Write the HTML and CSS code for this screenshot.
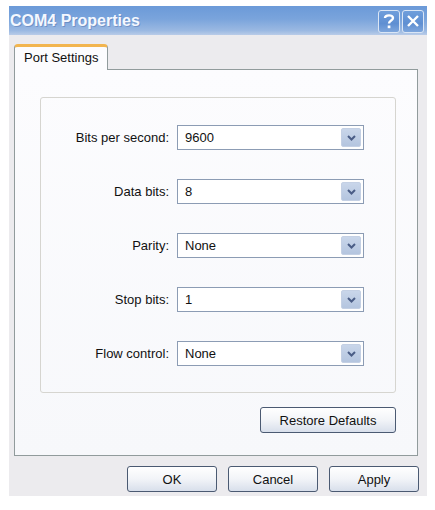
FILE: index.html
```html
<!DOCTYPE html>
<html>
<head>
<meta charset="utf-8">
<link rel="stylesheet" href="styles.css">
</head>
<body>
<div class="window">
  <div class="titlebar">
    <span class="title">COM4 Properties</span>
    <div class="tbtns">
      <span class="tbtn">
        <svg width="14" height="16" viewBox="0 0 14 16"><path d="M3 5 C3 1.5 11 1.5 11 5 C11 7.5 7 7.5 7 10.5" fill="none" stroke="#fff" stroke-width="2.4"/><rect x="5.7" y="12.5" width="2.7" height="2.7" fill="#fff"/></svg>
      </span>
      <span class="tbtn">
        <svg width="14" height="14" viewBox="0 0 14 14"><path d="M2 2 L12 12 M12 2 L2 12" stroke="#fff" stroke-width="2.4"/></svg>
      </span>
    </div>
  </div>
  <div class="client">
    <div class="tabs">
      <div class="tab">Port Settings</div>
    </div>
    <div class="panel">
      <div class="group">
        <div class="row"><span class="lbl">Bits per second:</span><div class="combo"><span class="val">9600</span><span class="drop"><svg width="9" height="6" viewBox="0 0 9 6"><path d="M1 1 L4.5 4.5 L8 1" fill="none" stroke="#4a5d86" stroke-width="2"/></svg></span></div></div>
        <div class="row"><span class="lbl">Data bits:</span><div class="combo"><span class="val">8</span><span class="drop"><svg width="9" height="6" viewBox="0 0 9 6"><path d="M1 1 L4.5 4.5 L8 1" fill="none" stroke="#4a5d86" stroke-width="2"/></svg></span></div></div>
        <div class="row"><span class="lbl">Parity:</span><div class="combo"><span class="val">None</span><span class="drop"><svg width="9" height="6" viewBox="0 0 9 6"><path d="M1 1 L4.5 4.5 L8 1" fill="none" stroke="#4a5d86" stroke-width="2"/></svg></span></div></div>
        <div class="row"><span class="lbl">Stop bits:</span><div class="combo"><span class="val">1</span><span class="drop"><svg width="9" height="6" viewBox="0 0 9 6"><path d="M1 1 L4.5 4.5 L8 1" fill="none" stroke="#4a5d86" stroke-width="2"/></svg></span></div></div>
        <div class="row"><span class="lbl">Flow control:</span><div class="combo"><span class="val">None</span><span class="drop"><svg width="9" height="6" viewBox="0 0 9 6"><path d="M1 1 L4.5 4.5 L8 1" fill="none" stroke="#4a5d86" stroke-width="2"/></svg></span></div></div>
      </div>
      <div class="restore-row">
        <button class="btn restore">Restore Defaults</button>
      </div>
    </div>
    <div class="actions">
      <button class="btn">OK</button>
      <button class="btn">Cancel</button>
      <button class="btn">Apply</button>
    </div>
  </div>
</div>
</body>
</html>
```

FILE: styles.css
```css
html, body {
  margin: 0;
  padding: 0;
  background: #ffffff;
  width: 435px;
  height: 510px;
  overflow: hidden;
  font-family: "Liberation Sans", Arial, sans-serif;
}

.window {
  margin: 6px 0 0 9px;
  width: 418px;
  height: 490px;
  background: #ecebee;
  display: flex;
  flex-direction: column;
}

.titlebar {
  height: 29px;
  flex: none;
  background: linear-gradient(#6b9ad8 0%, #7aa4dc 45%, #9bb9e2 85%, #b9cce8 100%);
  display: flex;
  align-items: center;
  justify-content: space-between;
  padding: 0 3px 0 1px;
}

.title {
  color: #f4f8ff;
  font-weight: bold;
  font-size: 16px;
  letter-spacing: 0;
  text-shadow: 1px 1px 0 rgba(60, 90, 150, 0.35);
}

.tbtns {
  display: flex;
  gap: 2px;
  margin-top: 1px;
}

.tbtn {
  width: 22px;
  height: 23px;
  box-sizing: border-box;
  border: 1px solid #dbe6f5;
  border-radius: 3px;
  background: linear-gradient(#6f9edb, #5f8fd2 60%, #7ea6dc);
  display: flex;
  align-items: center;
  justify-content: center;
}

.client {
  flex: 1;
  display: flex;
  flex-direction: column;
  padding: 9px 9px 0 5px;
}

.tabs {
  display: flex;
  height: 25px;
}

.tab {
  width: 94px;
  box-sizing: border-box;
  height: 26px;
  background: #fcfcfe;
  border: 1px solid #919b9c;
  border-top: 3px solid #f2b54f;
  border-bottom: none;
  border-radius: 4px 4px 0 0;
  font-size: 13px;
  color: #111;
  padding: 3px 0 0 9px;
  position: relative;
  z-index: 1;
}

.panel {
  height: 387px;
  box-sizing: border-box;
  background: linear-gradient(#fcfcfe, #f7f8fb);
  border: 1px solid #919b9c;
  padding: 27px 21px 0 25px;
  display: flex;
  flex-direction: column;
}

.group {
  height: 296px;
  box-sizing: border-box;
  border: 1px solid #d6d5d0;
  border-radius: 3px;
  padding: 27px 0 0 0;
  display: flex;
  flex-direction: column;
  gap: 29px;
}

.row {
  display: flex;
  align-items: center;
  height: 25px;
}

.lbl {
  width: 128px;
  text-align: right;
  font-size: 13px;
  color: #111;
  padding-right: 8px;
}

.combo {
  width: 187px;
  height: 25px;
  box-sizing: border-box;
  border: 1px solid #8c9cb4;
  background: #fff;
  display: flex;
  align-items: center;
  justify-content: space-between;
  padding: 2px;
}

.val {
  font-size: 13px;
  color: #111;
  padding-left: 5px;
}

.drop {
  width: 20px;
  height: 19px;
  box-sizing: border-box;
  border: 1px solid #c4d0e4;
  background: linear-gradient(#c9d6ea, #b4c5df);
  border-radius: 2px;
  display: flex;
  align-items: center;
  justify-content: center;
}

.restore-row {
  display: flex;
  justify-content: flex-end;
  margin-top: 14px;
}

.btn {
  font-family: "Liberation Sans", Arial, sans-serif;
  font-size: 13px;
  color: #111;
  height: 26px;
  box-sizing: border-box;
  border: 1px solid #4b5a72;
  border-radius: 3px;
  background: linear-gradient(#ffffff 0%, #f2f4f8 50%, #d8dfeb 100%);
  padding: 0;
  width: 90px;
}

.restore {
  width: 136px;
}

.actions {
  display: flex;
  justify-content: flex-end;
  gap: 11px;
  margin-top: 10px;
  margin-right: -1px;
}
```
